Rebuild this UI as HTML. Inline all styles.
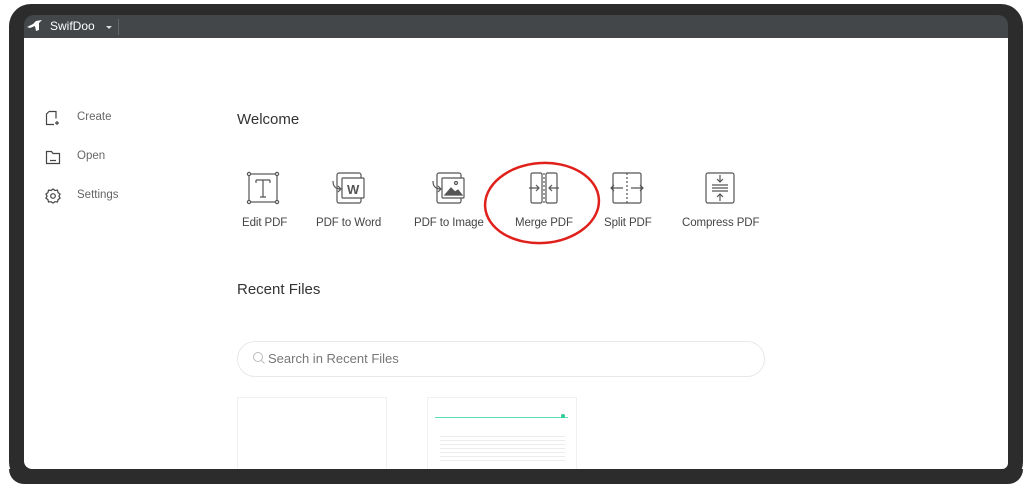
<!DOCTYPE html>
<html><head><style>
*{margin:0;padding:0;box-sizing:border-box}
body{width:1035px;height:485px;background:#fff;position:relative;overflow:hidden;font-family:"Liberation Sans",sans-serif}
.frame{position:absolute;left:9px;top:4px;width:1014px;height:480px;background:#2c2c2c;border-radius:22px}
.title{position:absolute;left:24px;top:15px;width:984px;height:24px;background:#43474a;border-radius:10px 10px 0 0}
.content{position:absolute;left:24px;top:38px;width:984px;height:431px;background:#fff;border-radius:0 0 6px 8px;overflow:hidden}
.t{position:absolute;color:#555;font-size:12px}
.side{position:absolute;color:#666;font-size:11.5px}
.lbl{position:absolute;top:217px;font-size:11.5px;color:#444;white-space:nowrap;letter-spacing:-0.1px}
svg{position:absolute}
</style></head><body>
<div class="frame"></div>
<div class="title">
<svg style="left:3px;top:5px" width="16" height="12" viewBox="0 0 16 12"><path d="M0 7 L6 4 L9 1 L15 0 L12 3 L12 10 L9 11 L8 6 L3 8Z" fill="#fff"/></svg>
<div style="position:absolute;left:26px;top:4px;color:#fff;font-size:12px">SwifDoo</div>
<div style="position:absolute;left:82px;top:11px;width:0;height:0;border-left:3px solid transparent;border-right:3px solid transparent;border-top:3px solid #ddd"></div>
<div style="position:absolute;left:94px;top:4px;width:1px;height:16px;background:#666"></div>
</div>
<div class="content"></div>
<svg style="left:45px;top:110px" width="16" height="16" viewBox="0 0 16 16" fill="none" stroke="#444" stroke-width="1.2"><path d="M4 1.5h7v7M9 14.5H1.5V4L4 1.5M12 11v4M10 13h4"/></svg>
<div class="side" style="left:77px;top:111px">Create</div>
<svg style="left:45px;top:150px" width="16" height="15" viewBox="0 0 16 15" fill="none" stroke="#444" stroke-width="1.2"><path d="M1.5 1.5h5l1.5 2h6.5v10h-13z M5 10.5h6"/></svg>
<div class="side" style="left:77px;top:150px">Open</div>
<svg style="left:45px;top:188px" width="16" height="16" viewBox="0 0 16 16" fill="none" stroke="#444" stroke-width="1.2"><path d="M8 1l2 1.5 2.5-.3.6 2.4 2 1.5-1.2 2 1.2 2-2 1.5-.6 2.4-2.5-.3L8 15l-2-1.3-2.5.3-.6-2.4-2-1.5 1.2-2-1.2-2 2-1.5.6-2.4 2.5.3z"/><circle cx="8" cy="8" r="2.3"/></svg>
<div class="side" style="left:77px;top:189px">Settings</div>
<div class="t" style="left:237px;top:111px;font-size:15px;color:#333">Welcome</div>
<svg style="left:246px;top:171px" width="34" height="34" viewBox="0 0 34 34" fill="none" stroke="#555" stroke-width="1.2"><rect x="3" y="3" width="28" height="28"/><circle cx="3" cy="3" r="1.6" fill="#fff"/><circle cx="31" cy="3" r="1.6" fill="#fff"/><circle cx="3" cy="31" r="1.6" fill="#fff"/><circle cx="31" cy="31" r="1.6" fill="#fff"/><path d="M10 9h14M10 9v3M24 9v3M17 9v17M14 26h6"/></svg>
<svg style="left:330px;top:171px" width="36" height="34" viewBox="0 0 36 34" fill="none" stroke="#555" stroke-width="1.2"><rect x="7" y="2" width="24" height="30" rx="2"/><rect x="12" y="7" width="22" height="20" rx="1" fill="#fff"/><text x="17" y="23" font-size="13" font-weight="bold" fill="#555" stroke="none" font-family="Liberation Sans">W</text><path d="M3 10c0 6 3 8 8 8M8 15l3 3-3 3"/></svg>
<svg style="left:430px;top:171px" width="36" height="34" viewBox="0 0 36 34" fill="none" stroke="#555" stroke-width="1.2"><rect x="7" y="2" width="24" height="30" rx="2"/><rect x="12" y="7" width="22" height="20" rx="1" fill="#fff"/><path d="M15 24l6-7 4 4 3-2 4 5z" fill="#555"/><circle cx="26" cy="12" r="1.5"/><path d="M3 10c0 6 3 8 8 8M8 15l3 3-3 3"/></svg>
<svg style="left:527px;top:171px" width="34" height="34" viewBox="0 0 34 34" fill="none" stroke="#555" stroke-width="1.2"><rect x="4" y="2" width="11" height="30" rx="1.5"/><rect x="19" y="2" width="11" height="30" rx="1.5"/><path d="M17 2v30" stroke-dasharray="2 2"/><path d="M2 17h10M9 14l3 3-3 3M32 17H22M25 14l-3 3 3 3"/></svg>
<svg style="left:610px;top:171px" width="34" height="34" viewBox="0 0 34 34" fill="none" stroke="#555" stroke-width="1.2"><rect x="3" y="2" width="28" height="30" rx="1.5"/><path d="M17 2v30" stroke-dasharray="2 2"/><path d="M13 17H1M4 14l-3 3 3 3M21 17h12M30 14l3 3-3 3"/></svg>
<svg style="left:703px;top:171px" width="34" height="34" viewBox="0 0 34 34" fill="none" stroke="#555" stroke-width="1.2"><rect x="3" y="2" width="28" height="30" rx="2"/><path d="M9 14h16M9 17h16M9 20h16M17 4v7M14 8l3 3 3-3M17 30v-7M14 26l3-3 3 3"/></svg>
<div class="lbl" style="left:242px">Edit PDF</div>
<div class="lbl" style="left:316px">PDF to Word</div>
<div class="lbl" style="left:414px">PDF to Image</div>
<div class="lbl" style="left:515px">Merge PDF</div>
<div class="lbl" style="left:604px">Split PDF</div>
<div class="lbl" style="left:682px">Compress PDF</div>
<svg style="left:482px;top:160px" width="122" height="86" viewBox="0 0 122 86"><ellipse cx="60" cy="43" rx="57" ry="40" fill="none" stroke="#e0201b" stroke-width="2.5" transform="rotate(-4 60 43)"/></svg>
<div class="t" style="left:237px;top:281px;font-size:15px;color:#333">Recent Files</div>
<div style="position:absolute;left:237px;top:341px;width:528px;height:36px;border:1px solid #e8e8e8;border-radius:18px"></div>
<svg style="left:252px;top:351px" width="14" height="14" viewBox="0 0 14 14" fill="none" stroke="#bbb" stroke-width="1"><circle cx="6" cy="6" r="4.5"/><path d="M9.5 9.5l3 3"/></svg>
<div class="t" style="left:268px;top:351px;font-size:13px;color:#777">Search in Recent Files</div>
<div style="position:absolute;left:237px;top:397px;width:150px;height:80px;border:1px solid #f0f0f0"></div>
<div style="position:absolute;left:427px;top:397px;width:150px;height:80px;border:1px solid #f0f0f0"></div>
<div style="position:absolute;left:435px;top:417px;width:133px;height:1px;background:#5de0b0"></div>
<div style="position:absolute;left:561px;top:414px;width:4px;height:4px;background:#3c9;border-radius:2px"></div>
<div style="position:absolute;left:440px;top:433px;width:125px;height:30px;background:repeating-linear-gradient(#fff 0 3px,#ececec 3px 4px)"></div>
<div style="position:absolute;left:9px;top:469px;width:1014px;height:15px;background:#2c2c2c;border-radius:0 0 22px 22px"></div>
</body></html>
